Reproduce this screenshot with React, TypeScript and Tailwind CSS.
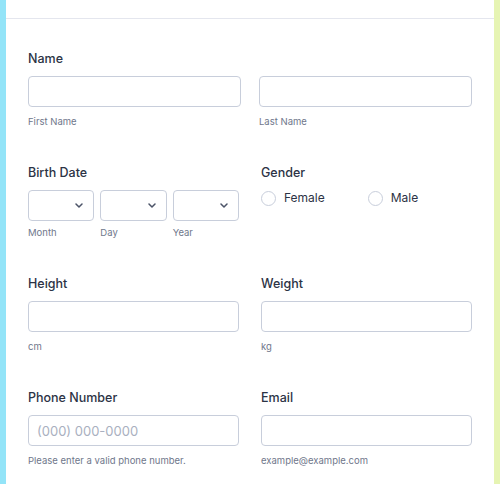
const labelCls = "block text-[12.5px] font-medium leading-[18px] text-[#2c3345]";
const subCls = "block text-[9.5px] leading-[14px] text-[#6f778b]";
const inputCls =
  "block h-[31px] w-full rounded-[4px] border border-[#c8cedb] bg-white px-2 text-[13px] text-[#2c3345] outline-none placeholder:text-[#a9b0c0]";

function Chevron() {
  return (
    <svg width="8" height="5" viewBox="0 0 8 5" fill="none" className="text-[#4c5468]">
      <path d="M1 1l3 3 3-3" stroke="currentColor" strokeWidth="1.5" strokeLinecap="round" strokeLinejoin="round" />
    </svg>
  );
}

function DateSelect({ label }: { label: string }) {
  return (
    <div className="flex-1">
      <div className="flex h-[31px] items-center justify-end rounded-[4px] border border-[#c8cedb] bg-white pr-[10px]">
        <Chevron />
      </div>
      <span className={subCls + " mt-[5px]"}>{label}</span>
    </div>
  );
}

function Radio({ label }: { label: string }) {
  return (
    <label className="flex items-center gap-2">
      <span className="h-[15px] w-[15px] rounded-full border border-[#c8cedb] bg-white" />
      <span className="text-[12px] leading-4 text-[#2c3345]">{label}</span>
    </label>
  );
}

function TextField({
  label,
  sub,
  placeholder,
}: {
  label: string;
  sub: string;
  placeholder?: string;
}) {
  return (
    <div>
      <span className={labelCls}>{label}</span>
      <input className={inputCls + " mt-[8px]"} placeholder={placeholder} />
      <span className={subCls + " mt-[8px]"}>{sub}</span>
    </div>
  );
}

export default function App() {
  return (
    <div
      className="flex h-[484px] w-[500px] overflow-hidden bg-white"
      style={{ fontFamily: "Inter, 'Noto Sans', sans-serif" }}
    >
      <div className="w-[6px] shrink-0 bg-[#93e4f8]" />
      <div className="flex-1">
        <div className="h-[19px] border-b border-[#e4e6ee]" />

        <div className="px-[22px] pt-[31px]">
          {/* name */}
          <span className={labelCls}>Name</span>
          <div className="mt-[8px] grid grid-cols-2 gap-[18px]">
            <div>
              <input className={inputCls} />
              <span className={subCls + " mt-[8px]"}>First Name</span>
            </div>
            <div>
              <input className={inputCls} />
              <span className={subCls + " mt-[8px]"}>Last Name</span>
            </div>
          </div>

          {/* birth date + gender */}
          <div className="mt-[35px] grid grid-cols-2 gap-[22px]">
            <div>
              <span className={labelCls}>Birth Date</span>
              <div className="mt-[8px] flex gap-[6px]">
                <DateSelect label="Month" />
                <DateSelect label="Day" />
                <DateSelect label="Year" />
              </div>
            </div>
            <div>
              <span className={labelCls}>Gender</span>
              <div className="mt-[8px] flex gap-[43px]">
                <Radio label="Female" />
                <Radio label="Male" />
              </div>
            </div>
          </div>

          {/* height / weight */}
          <div className="mt-[35px] grid grid-cols-2 gap-[22px]">
            <TextField label="Height" sub="cm" />
            <TextField label="Weight" sub="kg" />
          </div>

          {/* phone / email */}
          <div className="mt-[35px] grid grid-cols-2 gap-[22px]">
            <TextField
              label="Phone Number"
              sub="Please enter a valid phone number."
              placeholder="(000) 000-0000"
            />
            <TextField label="Email" sub="example@example.com" />
          </div>
        </div>
      </div>
      <div className="w-[6px] shrink-0 bg-[#e6f4b3]" />
    </div>
  );
}
